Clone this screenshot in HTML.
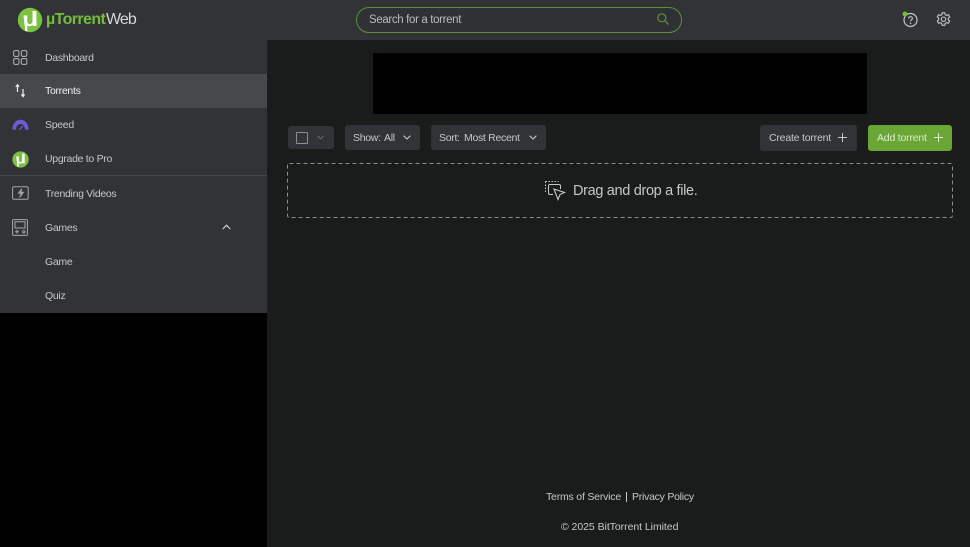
<!DOCTYPE html>
<html><head><meta charset="utf-8">
<style>
*{box-sizing:border-box}
html,body{margin:0;padding:0;width:970px;height:547px;overflow:hidden;background:#1a1c1c;font-family:"Liberation Sans",sans-serif;color:#cfd1d1}
.a{position:absolute;white-space:nowrap}
.t{font-size:10.5px;line-height:14px;letter-spacing:-.3px}
.f{font-size:10.5px;line-height:14px;letter-spacing:-.2px}
.btn{position:absolute;background:#313336;border-radius:3px}
svg{position:absolute;overflow:visible}
</style></head><body>
<div class="a" style="left:0;top:0;width:970px;height:40px;background:#313336"></div>
<div class="a" style="left:0;top:40px;width:267px;height:273px;background:#313336"></div>
<div class="a" style="left:0;top:313px;width:267px;height:234px;background:#000"></div>
<div class="a" style="left:0;top:74px;width:267px;height:34px;background:#45494b"></div>
<div class="a" style="left:0;top:175px;width:267px;height:1px;background:#45484a"></div>
<div class="a" style="left:373px;top:53px;width:494px;height:61px;background:#000"></div>

<!-- logo -->
<svg style="left:17px;top:7px" width="26" height="26" viewBox="0 0 26 26"><circle cx="13" cy="13" r="12.200" fill="#7cc242"/><path d="M6.500 8.500h3.800L10.200 14c0 2 1 3 2.600 3s2.700-1 2.700-3V4h3.800l.2 15h-3.600v-1.200c-1 1-2.100 1.500-3.500 1.500-.9 0-1.700-.2-2.300-.7l.2 5.400H8.300z" fill="#fff"/></svg>
<div class="a" style="left:46px;top:10px;font-size:16px;line-height:20px;font-weight:bold;color:#76bc3c;letter-spacing:-.6px">µTorrent</div>
<div class="a" style="left:106px;top:10px;font-size:16px;line-height:20px;color:#d6d8d8;letter-spacing:-.9px">Web</div>

<!-- search -->
<div class="a" style="left:356px;top:7px;width:326px;height:25.500px;border:1px solid #5f8f3c;border-radius:13px;background:#2f3134"></div>
<div class="a" style="left:369px;top:12.500px;font-size:11.500px;line-height:14px;color:#b9bbbb;letter-spacing:-.35px">Search for a torrent</div>
<svg style="left:656px;top:12px" width="14" height="14" viewBox="0 0 14 14" fill="none" stroke="#5f8f3c" stroke-width="1.200"><circle cx="5.800" cy="5.800" r="4"/><path d="M8.800 8.800l3.800 3.800"/></svg>

<!-- help/gear -->
<svg style="left:902px;top:11px" width="18" height="18" viewBox="0 0 18 18" fill="none"><circle cx="8.500" cy="9" r="6.500" stroke="#c4c6c6" stroke-width="1.200"/><path d="M6.600 7.500c0-1.200.9-1.800 1.900-1.800s1.900.7 1.900 1.700c0 1.400-1.900 1.500-1.900 3" stroke="#c4c6c6" stroke-width="1.100"/><circle cx="8.500" cy="12.300" r=".8" fill="#c4c6c6"/><circle cx="3" cy="3" r="2.500" fill="#76bc3c"/></svg>
<svg style="left:936px;top:12px" width="15" height="15" viewBox="0 0 15 15" fill="none" stroke="#c4c6c6" stroke-width="1.100"><path d="M6.200 .8h2.600l.4 1.900 1.400.7 1.800-.7 1.300 2.200-1.400 1.300v1.600l1.400 1.300-1.300 2.200-1.800-.7-1.400.8-.4 1.900H6.200l-.4-1.900-1.400-.8-1.800.7-1.300-2.200 1.400-1.300V6.200L1.300 4.900l1.300-2.200 1.800.7 1.400-.7z"/><circle cx="7.500" cy="7.200" r="2.200"/></svg>

<!-- sidebar icons -->
<svg style="left:13px;top:50px" width="15" height="15" viewBox="0 0 15 15" fill="none" stroke="#a6a8a9" stroke-width="1.100"><rect x=".6" y=".6" width="5.400" height="5.800" rx="1.500"/><rect x="8.400" y=".6" width="5.400" height="5.800" rx="1.500"/><rect x=".6" y="8.600" width="5.400" height="5.800" rx="1.500"/><rect x="8.400" y="8.600" width="5.400" height="5.800" rx="1.500"/></svg>
<svg style="left:14px;top:83px" width="13" height="16" viewBox="0 0 13 16" fill="none" stroke="#eee" stroke-width="1.200"><path d="M3.500 2.500V9"/><path d="M9 6v6.500"/><path d="M1.200 3.800L3.500 .8l2.300 3z" fill="#eee" stroke="none"/><path d="M6.700 11.400h4.600L9 14.800z" fill="#eee" stroke="none"/></svg>
<svg style="left:12px;top:119px" width="17" height="12" viewBox="0 0 17 12"><path d="M.4 10.800C.6 4.300 4 .8 8.500.8s7.900 3.500 8.100 10h-3.500C12.800 7 11 5 8.500 5S4.200 7 3.900 10.800z" fill="#6a5bd6"/><path d="M6.500 10.800l3.800-4.300 1 1-3 3.300z" fill="#6a5bd6"/></svg>
<svg style="left:12px;top:151px" width="17" height="17" viewBox="0 0 26 26"><circle cx="13" cy="13" r="12.500" fill="#7cc242"/><path d="M6.500 8.500h3.800L10.200 14c0 2 1 3 2.600 3s2.700-1 2.700-3V4h3.800l.2 15h-3.600v-1.200c-1 1-2.100 1.500-3.500 1.500-.9 0-1.700-.2-2.300-.7l.2 5.400H8.300z" fill="#fff"/></svg>
<svg style="left:12px;top:186px" width="17" height="14" viewBox="0 0 17 14" fill="none" stroke="#a6a8a9" stroke-width="1"><rect x=".6" y=".8" width="15.600" height="12.400" rx="1.500"/><path d="M9.800 2.800L6.500 7.300h3l-1.800 4 3.700-5h-2.800z"/></svg>
<svg style="left:12px;top:219px" width="16" height="17" viewBox="0 0 16 17" fill="none" stroke="#a6a8a9" stroke-width="1"><rect x=".6" y=".6" width="14.800" height="15.800" rx="1"/><rect x="3" y="2.800" width="10" height="6.200"/><path d="M3 12.800h4M5 10.800v4"/><circle cx="11.800" cy="12.800" r="1.200"/></svg>

<!-- sidebar labels -->
<div class="a t" style="left:45px;top:50.500px;color:#c6c8c8">Dashboard</div>
<div class="a t" style="left:45px;top:84px;color:#f0f0f0">Torrents</div>
<div class="a t" style="left:45px;top:118px;color:#c6c8c8">Speed</div>
<div class="a t" style="left:45px;top:152px;color:#c6c8c8">Upgrade to Pro</div>
<div class="a t" style="left:45px;top:186.500px;color:#c6c8c8">Trending Videos</div>
<div class="a t" style="left:45px;top:220.500px;color:#c6c8c8">Games</div>
<div class="a t" style="left:45px;top:254.500px;color:#c6c8c8">Game</div>
<div class="a t" style="left:45px;top:288.500px;color:#c6c8c8">Quiz</div>
<svg style="left:222px;top:224px" width="9" height="6" viewBox="0 0 9 6" fill="none" stroke="#d8d8d8" stroke-width="1.100"><path d="M.8 5L4.500 1.200 8.200 5"/></svg>

<!-- toolbar -->
<div class="btn" style="left:288px;top:126px;width:46px;height:23px"></div>
<div class="a" style="left:296px;top:132px;width:12px;height:12px;border:1px solid #8b8d8e;border-radius:1px"></div>
<svg style="left:317px;top:135px" width="7" height="5" viewBox="0 0 7 5" fill="none" stroke="#6f7172" stroke-width="1"><path d="M.6 .8L3.500 3.800 6.400 .8"/></svg>

<div class="btn" style="left:345px;top:125px;width:75px;height:25px"></div>
<div class="a t" style="left:353px;top:130.500px;color:#c6c8c8">Show:</div>
<div class="a t" style="left:384px;top:130.500px;color:#c6c8c8">All</div>
<svg style="left:403px;top:135px" width="8" height="5" viewBox="0 0 8 5" fill="none" stroke="#c6c8c8" stroke-width="1.100"><path d="M.6 .7L4 4 7.400 .7"/></svg>

<div class="btn" style="left:431px;top:125px;width:115px;height:25px"></div>
<div class="a t" style="left:439px;top:130.500px;color:#c6c8c8">Sort:</div>
<div class="a t" style="left:464px;top:130.500px;color:#c6c8c8">Most Recent</div>
<svg style="left:529px;top:135px" width="8" height="5" viewBox="0 0 8 5" fill="none" stroke="#c6c8c8" stroke-width="1.100"><path d="M.6 .7L4 4 7.400 .7"/></svg>

<div class="btn" style="left:760px;top:125px;width:97px;height:26px"></div>
<div class="a t" style="left:769px;top:130.500px;color:#c6c8c8;letter-spacing:-.2px">Create torrent</div>
<svg style="left:838px;top:133px" width="9" height="9" viewBox="0 0 9 9" stroke="#c6c8c8" stroke-width="1"><path d="M4.500 0v9M0 4.500h9"/></svg>

<div class="btn" style="left:868px;top:125px;width:84px;height:26px;background:#6aa635"></div>
<div class="a t" style="left:877px;top:130.500px;color:#dcebcd;letter-spacing:-.2px">Add torrent</div>
<svg style="left:934px;top:133px" width="9" height="9" viewBox="0 0 9 9" stroke="#dcebcd" stroke-width="1"><path d="M4.500 0v9M0 4.500h9"/></svg>

<!-- drop zone -->
<svg style="left:287px;top:163px" width="666" height="55" fill="none"><rect x=".5" y=".5" width="665" height="54" rx="2" stroke="#8b8d8e" stroke-width="1" stroke-dasharray="4 3"/></svg>
<svg style="left:545px;top:181px" width="21" height="20" viewBox="0 0 21 20" fill="none" stroke="#c6c8c8"><path d="M.5 .5h13M.5 .5v11" stroke-dasharray="1.500 1.500"/><path d="M8 13.500H5c-1 0-1.500-.5-1.500-1.500V5c0-1 .5-1.500 1.500-1.500h9c1 0 1.500.5 1.500 1.500v3" stroke-width="1"/><path d="M9 8l10.500 3.500-4.500 2-2 5z" stroke-width="1.100"/></svg>
<div class="a" style="left:573px;top:182px;font-size:14.500px;line-height:18px;color:#c6c8c8;letter-spacing:-.33px">Drag and drop a file.</div>

<!-- footer -->
<div class="a f" style="left:546px;top:490px;color:#c6c8c8">Terms of Service</div>
<div class="a" style="left:626px;top:492px;width:1px;height:10px;background:#c6c8c8"></div>
<div class="a f" style="left:632px;top:490px;color:#c6c8c8;letter-spacing:-.25px">Privacy Policy</div>
<div class="a f" style="left:561px;top:520px;color:#c6c8c8;letter-spacing:-.05px">© 2025 BitTorrent Limited</div>
</body></html>
